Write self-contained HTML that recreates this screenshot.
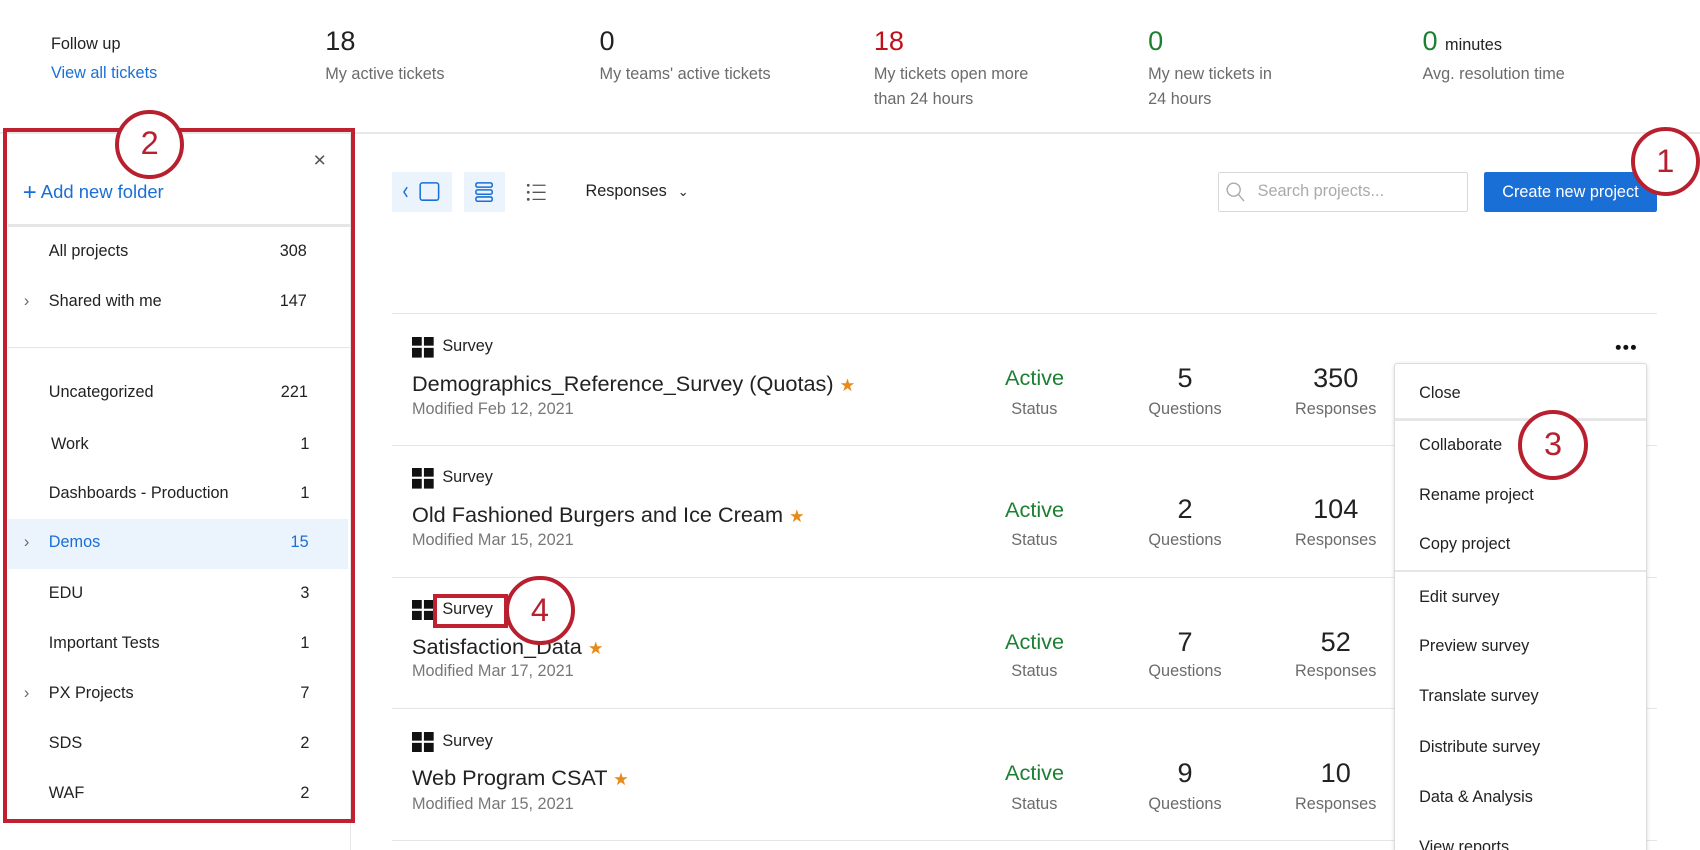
<!DOCTYPE html>
<html><head><meta charset="utf-8"><style>
html,body{margin:0;padding:0;background:#fff;overflow:hidden}
body{width:1700px;height:850px}
#w{position:relative;width:1568px;height:784px;zoom:1.08418;font-family:"Liberation Sans",Arial,sans-serif;color:#222;overflow:hidden}
.a{position:absolute;white-space:nowrap}
.big{font-size:25px;line-height:30px}
.lbl{font-size:15px;color:#6b6b6b;line-height:23px}
.side{font-size:15px;color:#222}
.cnt{position:absolute;right:1282px;text-align:right}
.circ{position:absolute;border:4px solid #b8202f;border-radius:50%;background:#fff;color:#b8202f;font-size:30px;text-align:center;box-sizing:border-box}
.hr{position:absolute;height:1px;background:#e6e6e6}
.sv{font-size:15px}
.title{font-size:20px;color:#222}
.mod{font-size:15px;color:#777}
.act{font-size:20px;color:#1c8033}
.num{font-size:25px;color:#222;text-align:center;width:120px}
.sub{font-size:15px;color:#6b6b6b;text-align:center;width:120px}
.mi{position:absolute;left:22px;font-size:15px;color:#222}
.star{color:#e88a1a;font-size:16px}
</style></head><body><div id="w">
<!-- header -->
<div class="a" style="left:47px;top:32px;font-size:15px">Follow up</div>
<div class="a" style="left:47px;top:59px;font-size:15px;color:#1a6fd6">View all tickets</div>
<div class="a big" style="left:300px;top:23px">18</div>
<div class="a lbl" style="left:300px;top:57px">My active tickets</div>
<div class="a big" style="left:553px;top:23px">0</div>
<div class="a lbl" style="left:553px;top:57px">My teams' active tickets</div>
<div class="a big" style="left:806px;top:23px;color:#c0101b">18</div>
<div class="a lbl" style="left:806px;top:57px">My tickets open more<br>than 24 hours</div>
<div class="a big" style="left:1059px;top:23px;color:#1c8033">0</div>
<div class="a lbl" style="left:1059px;top:57px">My new tickets in<br>24 hours</div>
<div class="a big" style="left:1312px;top:23px;color:#1c8033">0 <span style="font-size:15px;color:#222">minutes</span></div>
<div class="a lbl" style="left:1312px;top:57px">Avg. resolution time</div>
<div class="hr" style="left:0;top:122px;width:1568px;background:#e8e8e8;height:2px"></div>

<!-- sidebar -->
<div class="a" style="left:323px;top:122px;width:1px;height:662px;background:#e6e6e6"></div>
<div class="a" style="left:3px;top:118px;width:324px;height:641px;border:4px solid #c0202f;box-sizing:border-box"></div>
<div class="a" style="left:289px;top:136px;font-size:20px;color:#555">×</div>
<div class="a" style="left:21px;top:165px;font-size:17px;color:#1a6fd6"><span style="font-size:22px;vertical-align:-2px">+</span> Add new folder</div>
<div class="hr" style="left:7px;top:207px;width:316px;height:2px"></div>
<div class="a" style="left:7px;top:479px;width:314px;height:46px;background:#ebf3fc"></div>
<div class="hr" style="left:7px;top:320px;width:316px"></div>
<div class="a side" style="left:45px;top:223px">All projects</div><div class="a side" style="left:258px;top:223px">308</div>
<div class="a side" style="left:22px;top:269px;color:#666">›</div><div class="a side" style="left:45px;top:269px">Shared with me</div><div class="a side" style="left:258px;top:269px">147</div>
<div class="a side" style="left:45px;top:353px">Uncategorized</div><div class="a side" style="left:259px;top:353px">221</div>
<div class="a side" style="left:47px;top:401px">Work</div><div class="a side" style="left:277px;top:401px">1</div>
<div class="a side" style="left:45px;top:446px">Dashboards - Production</div><div class="a side" style="left:277px;top:446px">1</div>
<div class="a side" style="left:22px;top:492px;color:#666">›</div><div class="a side" style="left:45px;top:492px;color:#1a6fd6">Demos</div><div class="a side" style="left:268px;top:492px;color:#1a6fd6">15</div>
<div class="a side" style="left:45px;top:539px">EDU</div><div class="a side" style="left:277px;top:539px">3</div>
<div class="a side" style="left:45px;top:585px">Important Tests</div><div class="a side" style="left:277px;top:585px">1</div>
<div class="a side" style="left:22px;top:631px;color:#666">›</div><div class="a side" style="left:45px;top:631px">PX Projects</div><div class="a side" style="left:277px;top:631px">7</div>
<div class="a side" style="left:45px;top:677px">SDS</div><div class="a side" style="left:277px;top:677px">2</div>
<div class="a side" style="left:45px;top:723px">WAF</div><div class="a side" style="left:277px;top:723px">2</div>
<div class="circ" style="left:106px;top:101px;width:64px;height:64px;line-height:55px">2</div>

<!-- toolbar -->
<div class="a" style="left:362px;top:159px;width:55px;height:37px;background:#ebf3fc"></div>
<svg class="a" style="left:362px;top:159px" width="55" height="37"><path d="M14 14l-3 4.5 3 4.5" stroke="#1a6fd6" fill="none" stroke-width="1.3"/><rect x="26" y="10" width="17" height="16" rx="2" stroke="#1a6fd6" fill="none" stroke-width="1.4"/></svg>
<div class="a" style="left:428px;top:159px;width:38px;height:37px;background:#ebf3fc"></div>
<svg class="a" style="left:428px;top:159px" width="38" height="37"><g stroke="#1a6fd6" fill="none" stroke-width="1.4"><rect x="11" y="10" width="15" height="4" rx="1.5"/><rect x="11" y="16.5" width="15" height="4" rx="1.5"/><rect x="11" y="23" width="15" height="4" rx="1.5"/></g></svg>
<svg class="a" style="left:484px;top:168px" width="22" height="20"><g fill="#555"><circle cx="3" cy="3" r="1.3"/><circle cx="3" cy="9.5" r="1.3"/><circle cx="3" cy="16" r="1.3"/></g><g stroke="#555" stroke-width="1.2"><path d="M7 3h12M7 9.5h12M7 16h12"/></g></svg>
<div class="a" style="left:540px;top:168px;font-size:15px">Responses <span style="font-size:12px;margin-left:6px">⌄</span></div>
<div class="a" style="left:1123px;top:159px;width:231px;height:37px;border:1px solid #d8d8d8;box-sizing:border-box;border-radius:2px"></div>
<svg class="a" style="left:1130px;top:167px" width="20" height="22"><circle cx="8" cy="8" r="6" stroke="#aaa" fill="none" stroke-width="1.3"/><path d="M12.5 12.5l5 6" stroke="#aaa" stroke-width="1.3"/></svg>
<div class="a" style="left:1160px;top:168px;font-size:15px;color:#aaa">Search projects...</div>
<div class="a" style="left:1369px;top:159px;width:159px;height:37px;background:#1a6fd6;border-radius:2px;color:#fff;font-size:15px;text-align:center;line-height:37px">Create new project</div>
<div class="circ" style="left:1504px;top:117px;width:64px;height:64px;line-height:56px;font-size:30px">1</div>

<!-- rows -->
<div class="hr" style="left:362px;top:289px;width:1166px"></div>
<div class="hr" style="left:362px;top:410px;width:1166px"></div>
<div class="hr" style="left:362px;top:532px;width:1166px"></div>
<div class="hr" style="left:362px;top:653px;width:1166px"></div>
<div class="hr" style="left:362px;top:775px;width:1166px"></div>

<div id="rows"></div>
<!-- row 1 -->
<svg class="a" style="left:380px;top:311px" width="20" height="19"><g fill="#111"><rect x="0" y="0" width="9" height="8"/><rect x="11" y="0" width="9" height="8"/><rect x="0" y="10" width="9" height="9"/><rect x="11" y="10" width="9" height="9"/></g><path d="M9 8l2 2" stroke="#fff"/></svg>
<div class="a sv" style="left:408px;top:311px">Survey</div>
<div class="a title" style="left:380px;top:342px">Demographics_Reference_Survey (Quotas) <span class="star">★</span></div>
<div class="a mod" style="left:380px;top:369px">Modified Feb 12, 2021</div>
<div class="a act" style="left:927px;top:337px">Active</div><div class="a sub" style="left:894px;top:369px">Status</div>
<div class="a num" style="left:1033px;top:334px">5</div><div class="a sub" style="left:1033px;top:369px">Questions</div>
<div class="a num" style="left:1172px;top:334px">350</div><div class="a sub" style="left:1172px;top:369px">Responses</div>
<!-- row 2 -->
<svg class="a" style="left:380px;top:432px" width="20" height="19"><g fill="#111"><rect x="0" y="0" width="9" height="8"/><rect x="11" y="0" width="9" height="8"/><rect x="0" y="10" width="9" height="9"/><rect x="11" y="10" width="9" height="9"/></g></svg>
<div class="a sv" style="left:408px;top:432px">Survey</div>
<div class="a title" style="left:380px;top:463px">Old Fashioned Burgers and Ice Cream <span class="star">★</span></div>
<div class="a mod" style="left:380px;top:490px">Modified Mar 15, 2021</div>
<div class="a act" style="left:927px;top:458px">Active</div><div class="a sub" style="left:894px;top:490px">Status</div>
<div class="a num" style="left:1033px;top:455px">2</div><div class="a sub" style="left:1033px;top:490px">Questions</div>
<div class="a num" style="left:1172px;top:455px">104</div><div class="a sub" style="left:1172px;top:490px">Responses</div>
<!-- row 3 -->
<svg class="a" style="left:380px;top:553px" width="20" height="19"><g fill="#111"><rect x="0" y="0" width="9" height="8"/><rect x="11" y="0" width="9" height="8"/><rect x="0" y="10" width="9" height="9"/><rect x="11" y="10" width="9" height="9"/></g></svg>
<div class="a sv" style="left:408px;top:553px">Survey</div>
<div class="a title" style="left:380px;top:585px">Satisfaction_Data <span class="star">★</span></div>
<div class="a mod" style="left:380px;top:611px">Modified Mar 17, 2021</div>
<div class="a act" style="left:927px;top:580px">Active</div><div class="a sub" style="left:894px;top:611px">Status</div>
<div class="a num" style="left:1033px;top:577px">7</div><div class="a sub" style="left:1033px;top:611px">Questions</div>
<div class="a num" style="left:1172px;top:577px">52</div><div class="a sub" style="left:1172px;top:611px">Responses</div>
<div class="a" style="left:399px;top:548px;width:70px;height:31px;border:4px solid #c0202f;box-sizing:border-box"></div>
<div class="circ" style="left:466px;top:531px;width:64px;height:64px;line-height:56px">4</div>
<!-- row 4 -->
<svg class="a" style="left:380px;top:675px" width="20" height="19"><g fill="#111"><rect x="0" y="0" width="9" height="8"/><rect x="11" y="0" width="9" height="8"/><rect x="0" y="10" width="9" height="9"/><rect x="11" y="10" width="9" height="9"/></g></svg>
<div class="a sv" style="left:408px;top:675px">Survey</div>
<div class="a title" style="left:380px;top:706px">Web Program CSAT <span class="star">★</span></div>
<div class="a mod" style="left:380px;top:733px">Modified Mar 15, 2021</div>
<div class="a act" style="left:927px;top:701px">Active</div><div class="a sub" style="left:894px;top:733px">Status</div>
<div class="a num" style="left:1033px;top:698px">9</div><div class="a sub" style="left:1033px;top:733px">Questions</div>
<div class="a num" style="left:1172px;top:698px">10</div><div class="a sub" style="left:1172px;top:733px">Responses</div>

<!-- dots -->
<svg class="a" style="left:1490px;top:316px" width="22" height="8"><g fill="#111"><circle cx="3" cy="4" r="2.3"/><circle cx="10" cy="4" r="2.3"/><circle cx="17" cy="4" r="2.3"/></g></svg>

<!-- menu -->
<div class="a" style="left:1286px;top:335px;width:231px;height:460px;background:#fff;border:1px solid #dcdcdc;border-radius:3px;box-shadow:0 1px 4px rgba(0,0,0,.15)">
<div class="mi" style="top:18px">Close</div>
<div class="hr" style="left:0;top:50px;width:231px;height:2px"></div>
<div class="mi" style="top:66px">Collaborate</div>
<div class="mi" style="top:112px">Rename project</div>
<div class="mi" style="top:158px">Copy project</div>
<div class="hr" style="left:0;top:190px;width:231px;height:2px"></div>
<div class="mi" style="top:206px">Edit survey</div>
<div class="mi" style="top:252px">Preview survey</div>
<div class="mi" style="top:298px">Translate survey</div>
<div class="mi" style="top:345px">Distribute survey</div>
<div class="mi" style="top:391px">Data &amp; Analysis</div>
<div class="mi" style="top:437px">View reports</div>
</div>
<div class="circ" style="left:1400px;top:378px;width:65px;height:65px;line-height:57px">3</div>
</div></body></html>
